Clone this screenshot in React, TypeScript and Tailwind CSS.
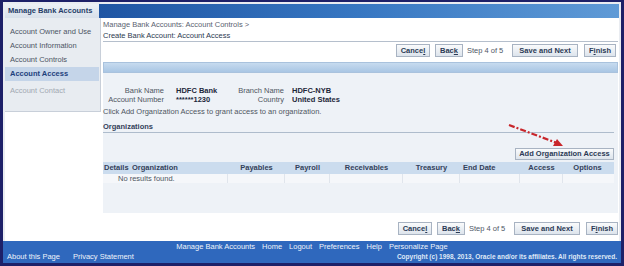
import React from 'react'

const font = { fontFamily: '"Liberation Sans", Arial, sans-serif' }

const navItems = [
  { label: 'Account Owner and Use', state: 'normal' },
  { label: 'Account Information', state: 'normal' },
  { label: 'Account Controls', state: 'normal' },
  { label: 'Account Access', state: 'active' },
  { label: 'Account Contact', state: 'disabled' },
]

function Btn({ w, children }: { w: string; children: React.ReactNode }) {
  return (
    <div
      className={`${w} flex h-[13px] items-center justify-center border border-[#a8b3c2] bg-gradient-to-b from-[#fafbfc] to-[#dde4ec] text-[7.5px] font-bold text-[#2b3a55]`}
    >
      {children}
    </div>
  )
}

function ButtonRow() {
  return (
    <div className="flex items-center">
      <Btn w="w-[34px]">
        Cance<span className="underline">l</span>
      </Btn>
      <div className="w-[5px]" />
      <Btn w="w-[28px]">
        Bac<span className="underline">k</span>
      </Btn>
      <span className="ml-[4px] w-[45px] text-[7.5px] text-[#4e5766]">Step 4 of 5</span>
      <Btn w="w-[66px]">Save and Next</Btn>
      <div className="w-[6px]" />
      <Btn w="w-[32px]">
        F<span className="underline">i</span>nish
      </Btn>
    </div>
  )
}

const cols = [
  { label: 'Details', w: 'w-[27px]', align: 'text-left pl-[1px]' },
  { label: 'Organization', w: 'w-[98px]', align: 'text-left pl-[2px]' },
  { label: 'Payables', w: 'w-[57px]', align: 'text-center' },
  { label: 'Payroll', w: 'w-[45px]', align: 'text-center' },
  { label: 'Receivables', w: 'w-[73px]', align: 'text-center' },
  { label: 'Treasury', w: 'w-[57px]', align: 'text-center' },
  { label: 'End Date', w: 'w-[60px]', align: 'text-left pl-[3px]' },
  { label: 'Access', w: 'w-[43px]', align: 'text-center' },
  { label: 'Options', w: 'w-[49px]', align: 'text-center' },
]

export default function App() {
  return (
    <div
      className="flex h-[266px] w-[624px] flex-col bg-[#1d2068] pb-[3px] pl-[3px] pr-[3px] pt-[2px]"
      style={font}
    >
      <div className="flex flex-1 flex-col bg-[#e9ecf1]">
        <div className="flex flex-1 flex-col px-[2px] pt-[2px]">
          {/* tab strip */}
          <div className="flex h-[14px]">
            <div className="flex w-[94px] items-center whitespace-nowrap bg-gradient-to-b from-[#edf1f6] to-[#d8e0ea] pl-[3px] text-[7.5px] font-bold text-[#253d68]">
              Manage Bank Accounts
            </div>
            <div className="flex-1 bg-gradient-to-r from-[#1f55a3] via-[#3777c2] to-[#5f9ad6]" />
          </div>

          <div className="flex flex-1 bg-white">
            {/* left nav */}
            <div className="w-[96px]">
              <div className="flex h-[94px] flex-col border-b border-r border-[#c8cfd9] bg-[#e8ecf1] pt-[7px]">
                {navItems.map((item) => (
                  <div
                    key={item.label}
                    className={`flex h-[14px] items-center whitespace-nowrap pl-[5px] text-[7.5px] ${
                      item.state === 'active'
                        ? 'mr-[1px] bg-[#c5d5e9] font-bold text-[#1d3f7c]'
                        : item.state === 'disabled'
                          ? 'text-[#a2a9b2]'
                          : 'text-[#4c5464]'
                    } ${item.state === 'disabled' ? 'mt-[3px]' : ''}`}
                  >
                    {item.label}
                  </div>
                ))}
              </div>
            </div>

            {/* main */}
            <div className="ml-[2px] mr-[1px] flex flex-1 flex-col">
              <div className="flex h-[12px] items-end text-[7.5px] text-[#5a6270]">
                Manage Bank Accounts: Account Controls &gt;
              </div>
              <div className="flex h-[12px] items-center border-b border-[#b5bfcc] text-[7.5px] text-[#2b3950]">
                Create Bank Account: Account Access
              </div>
              <div className="mt-[2px] flex justify-end pr-[2px]">
                <ButtonRow />
              </div>

              <div className="mt-[5px] h-[11px] border border-[#a9c2dd] bg-gradient-to-b from-[#c7dbef] to-[#a9c6e4]" />

              <div className="relative flex h-[140px] flex-col bg-[#eef2f7] pr-[4px] pt-[13px]">
                <div className="grid grid-cols-[61px_52px_68px_auto] whitespace-nowrap text-[7.5px] leading-[9px]">
                  <span className="text-right text-[#4e5662]">Bank Name</span>
                  <span className="pl-[12px] font-bold text-[#1d2739]">HDFC Bank</span>
                  <span className="text-right text-[#4e5662]">Branch Name</span>
                  <span className="pl-[8px] font-bold text-[#1d2739]">HDFC-NYB</span>
                  <span className="text-right text-[#4e5662]">Account Number</span>
                  <span className="pl-[12px] font-bold text-[#1d2739]">******1230</span>
                  <span className="text-right text-[#4e5662]">Country</span>
                  <span className="pl-[8px] font-bold text-[#1d2739]">United States</span>
                </div>
                <div className="mt-[3px] text-[7.5px] leading-[9px] text-[#4e5662]">
                  Click Add Organization Access to grant access to an organization.
                </div>
                <div className="mt-[6px] border-b border-[#aebccc] pb-[1px] text-[7.5px] font-bold leading-[9px] text-[#33415a]">
                  Organizations
                </div>

                <div className="mt-[15px] flex justify-end">
                  <div className="flex h-[12px] w-[99px] items-center justify-center border border-[#a8b3c2] bg-gradient-to-b from-[#fafbfc] to-[#dde4ec] text-[7.5px] font-bold text-[#2b3a55]">
                    Add Organization Access
                  </div>
                </div>

                <div className="mt-[2px] flex flex-col">
                  <div className="flex h-[12px] items-center bg-[#cbdcee] text-[7.5px] font-bold text-[#33415a]">
                    {cols.map((c) => (
                      <div key={c.label} className={`${c.w} ${c.align}`}>
                        {c.label}
                      </div>
                    ))}
                  </div>
                  <div className="flex h-[9px] bg-[#f5f7fa] text-[7.5px] leading-[9px] text-[#4e5662]">
                    <div className="w-[125px] border-r border-[#e0e5ec] pl-[15px]">No results found.</div>
                    {cols.slice(2).map((c) => (
                      <div key={c.label} className={`${c.w} border-r border-[#e0e5ec] last:border-r-0`} />
                    ))}
                  </div>
                </div>

                {/* red annotation arrow */}
                <svg
                  className="absolute left-[400px] top-[48px]"
                  width="66"
                  height="30"
                  viewBox="0 0 66 30"
                >
                  <line
                    x1="6"
                    y1="4"
                    x2="54"
                    y2="22"
                    stroke="#c8262b"
                    strokeWidth="2.2"
                    strokeDasharray="6 2 2 2"
                  />
                  <polygon points="60,25 50,25 54,18" fill="#c8262b" />
                </svg>
              </div>

              <div className="mt-[9px] flex justify-end">
                <ButtonRow />
              </div>
            </div>
          </div>
        </div>

        {/* footer */}
        <div className="flex h-[22px] flex-col bg-[#2f68bd] text-[7.5px] text-[#eef3fb]">
          <div className="flex h-[10px] items-center justify-center gap-[7px] pt-[2px]">
            <span>Manage Bank Accounts</span>
            <span>Home</span>
            <span>Logout</span>
            <span>Preferences</span>
            <span>Help</span>
            <span>Personalize Page</span>
          </div>
          <div className="flex h-[12px] items-center pl-[4px] pr-[4px]">
            <span>About this Page</span>
            <span className="ml-[13px]">Privacy Statement</span>
            <span className="ml-auto text-[6.5px] font-bold text-[#dfe8f7]">
              Copyright (c) 1998, 2013, Oracle and/or its affiliates. All rights reserved.
            </span>
          </div>
        </div>
      </div>
    </div>
  )
}
